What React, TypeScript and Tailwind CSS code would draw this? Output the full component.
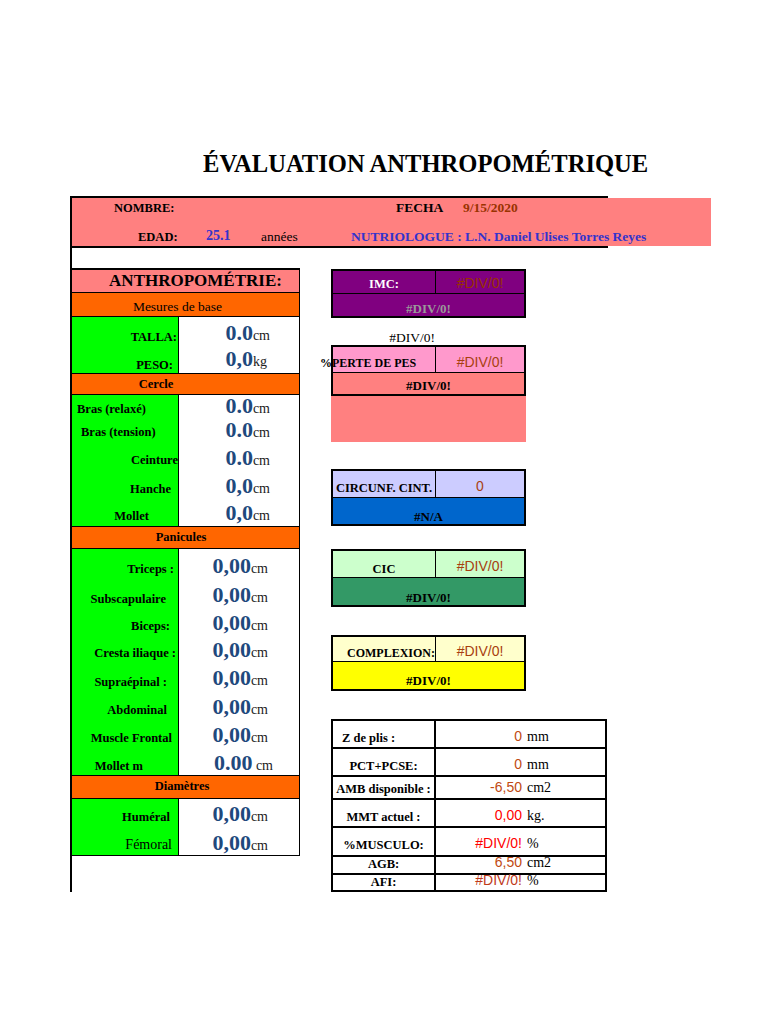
import React from "react";

type Row = {
  label: string;
  h: string;
  lc: string;
  value: string;
  unit: string;
  vc: string;
  normal?: boolean;
};

const baseRows: Row[] = [
  { label: "TALLA:", h: "h-[28px]", lc: "justify-end pr-[1px] pb-[2px]", value: "0.0", unit: "cm", vc: "pr-[29px] pb-[1px]" },
  { label: "PESO:", h: "h-[28px]", lc: "justify-end pr-[5px] pb-[2px]", value: "0,0", unit: "kg", vc: "pr-[32px] pb-[3px]" },
];

const cercleRows: Row[] = [
  { label: "Bras (relaxé)", h: "h-[23px]", lc: "justify-start pl-[5px] pb-[3px]", value: "0.0", unit: "cm", vc: "pr-[29px] pb-[1px]" },
  { label: "Bras (tension)", h: "h-[24px]", lc: "justify-start pl-[9px] pb-[4px]", value: "0.0", unit: "cm", vc: "pr-[29px] pb-[1px]" },
  { label: "Ceinture", h: "h-[28px]", lc: "justify-end pr-0 pb-[4px]", value: "0.0", unit: "cm", vc: "pr-[29px] pb-[1px]" },
  { label: "Hanche", h: "h-[28px]", lc: "justify-end pr-[7px] pb-[3px]", value: "0,0", unit: "cm", vc: "pr-[29px] pb-[1px]" },
  { label: "Mollet", h: "h-[28px]", lc: "justify-end pr-[29px] pb-[4px]", value: "0,0", unit: "cm", vc: "pr-[29px] pb-[2px]" },
];

const panRows: Row[] = [
  { label: "Triceps :", h: "h-[29px]", lc: "justify-end pr-[4px] pb-[3px]", value: "0,00", unit: "cm", vc: "pr-[31px] pb-[1px]" },
  { label: "Subscapulaire", h: "h-[30px]", lc: "justify-end pr-[12px] pb-[3px]", value: "0,00", unit: "cm", vc: "pr-[31px] pb-[2px]" },
  { label: "Biceps:", h: "h-[27px]", lc: "justify-end pr-[8px] pb-[3px]", value: "0,00", unit: "cm", vc: "pr-[31px] pb-[1px]" },
  { label: "Cresta iliaque :", h: "h-[28px]", lc: "justify-end pr-[2px] pb-[4px]", value: "0,00", unit: "cm", vc: "pr-[31px] pb-[2px]" },
  { label: "Supraépinal :", h: "h-[27px]", lc: "justify-end pr-[11px] pb-[2px]", value: "0,00", unit: "cm", vc: "pr-[31px] pb-[1px]" },
  { label: "Abdominal", h: "h-[30px]", lc: "justify-end pr-[11px] pb-[4px]", value: "0,00", unit: "cm", vc: "pr-[31px] pb-[2px]" },
  { label: "Muscle Frontal", h: "h-[28px]", lc: "justify-end pr-[6px] pb-[4px]", value: "0,00", unit: "cm", vc: "pr-[31px] pb-[2px]" },
  { label: "Mollet m", h: "h-[27px]", lc: "justify-end pr-[35px] pb-[3px]", value: "0.00", unit: "\u00a0cm", vc: "pr-[26px] pb-[1px]" },
];

const diamRows: Row[] = [
  { label: "Huméral", h: "h-[28px]", lc: "justify-end pr-[8px] pb-[4px]", value: "0,00", unit: "cm", vc: "pr-[31px] pb-[2px]" },
  { label: "Fémoral", h: "h-[28px]", lc: "justify-end pr-[6px] pb-[3px]", value: "0,00", unit: "cm", vc: "pr-[31px] pb-[1px]", normal: true },
];

const sans = "font-['Liberation_Sans',Arial,sans-serif]";

function MeasureRow({ r }: { r: Row }) {
  return (
    <div className={`flex ${r.h}`}>
      <div
        className={`w-[106px] bg-[#00FF00] flex items-end whitespace-nowrap leading-none ${r.lc} ${
          r.normal ? "text-[14px] font-normal" : "text-[12.5px] font-bold"
        }`}
      >
        {r.label}
      </div>
      <div className={`flex-1 bg-white border-l border-black flex items-end justify-end ${r.vc}`}>
        <span className="leading-none whitespace-nowrap">
          <span className="text-[22px] font-bold text-[#1F497D]">{r.value}</span>
          <span className="text-[14px] text-[#222]">{r.unit}</span>
        </span>
      </div>
    </div>
  );
}

function Band({ text, cls }: { text: string; cls: string }) {
  return (
    <div className={`bg-[#FF6600] border-black flex items-end justify-center leading-none ${cls}`}>
      {text}
    </div>
  );
}

type BRow = { label: string; h: string; pb: string; value: string; color: string; unit: string; lc: string };

const bottomRows: BRow[] = [
  { label: "Z de plis :", h: "h-[28px] border-b-2", pb: "pb-[3px]", value: "0", color: "text-[#BF4A12]", unit: "mm", lc: "justify-start pl-[9px]" },
  { label: "PCT+PCSE:", h: "h-[28px] border-b-2", pb: "pb-[3px]", value: "0", color: "text-[#BF4A12]", unit: "mm", lc: "justify-center" },
  { label: "AMB disponible :", h: "h-[23px] border-b-2", pb: "pb-[3px]", value: "-6,50", color: "text-[#BF4A12]", unit: "cm2", lc: "justify-center" },
  { label: "MMT actuel :", h: "h-[28px] border-b-2", pb: "pb-[3px]", value: "0,00", color: "text-[#FF0000]", unit: "kg.", lc: "justify-center" },
  { label: "%MUSCULO:", h: "h-[29px] border-b-2", pb: "pb-[4px]", value: "#DIV/0!", color: "text-[#FF0000]", unit: "%", lc: "justify-center" },
  { label: "AGB:", h: "h-[18px] border-b-2", pb: "pb-[3px]", value: "6,50", color: "text-[#BF4A12]", unit: "cm2", lc: "justify-center" },
  { label: "AFI:", h: "h-[15px]", pb: "pb-[2px]", value: "#DIV/0!", color: "text-[#C0391A]", unit: "%", lc: "justify-center" },
];

export default function App() {
  return (
    <div className="w-[768px] h-[1024px] bg-white text-black font-['Liberation_Serif','Times_New_Roman',serif]">
      <div className="pt-[152px] pl-[203px]">
        <div className="h-[24px] text-[24.6px] font-bold leading-none whitespace-nowrap">
          ÉVALUATION ANTHROPOMÉTRIQUE
        </div>
      </div>

      <div className="mt-[20px] ml-[70px] w-[641px] border-l-2 border-black">
        {/* header */}
        <div className="h-[2px] w-[536px] bg-black" />
        <div className="h-[48px] w-[639px] bg-[#FF8080] flex flex-col">
          <div className="h-[24px] flex items-end pb-[8px] pl-[42px] leading-none font-bold whitespace-nowrap">
            <span className="w-[282px] text-[12.5px]">NOMBRE:</span>
            <span className="w-[67px] text-[13.5px]">FECHA</span>
            <span className="text-[13.5px] text-[#993300]">9/15/2020</span>
          </div>
          <div className="h-[24px] flex items-end pb-[3px] pl-[66px] leading-none whitespace-nowrap">
            <span className="w-[68px] text-[12.5px] font-bold">EDAD:</span>
            <span className="w-[55px] text-[14px] font-bold text-[#3333CC]">25.1</span>
            <span className="w-[90px] text-[13.5px]">années</span>
            <span className="text-[13.5px] font-bold text-[#3333CC]">NUTRIOLOGUE : L.N. Daniel Ulises Torres Reyes</span>
          </div>
        </div>
        <div className="h-[2px] w-[536px] bg-black" />
        <div className="h-[20px]" />

        <div className="flex items-start">
          {/* left table */}
          <div className="w-[228px] border-t-2 border-r border-b border-black">
            <div className="h-[23px] bg-[#FF8080] border-b border-black flex items-end justify-center pl-[20px] pb-[3px] text-[17px] font-bold leading-none">
              ANTHROPOMÉTRIE:
            </div>
            <Band text="Mesures de base" cls="h-[24px] border-b text-[13.5px] pr-[16px] pb-[3px]" />
            {baseRows.map((r) => (
              <MeasureRow key={r.label} r={r} />
            ))}
            <Band text="Cercle" cls="h-[22px] border-y text-[12.5px] font-bold pr-[59px] pb-[4px]" />
            {cercleRows.map((r) => (
              <MeasureRow key={r.label} r={r} />
            ))}
            <Band text="Panicules" cls="h-[23px] border-y text-[12.5px] font-bold pr-[9px] pb-[5px]" />
            {panRows.map((r) => (
              <MeasureRow key={r.label} r={r} />
            ))}
            <Band text="Diamètres" cls="h-[24px] border-y text-[12.5px] font-bold pr-[7px] pb-[6px]" />
            {diamRows.map((r) => (
              <MeasureRow key={r.label} r={r} />
            ))}
          </div>

          {/* right column */}
          <div className="ml-[31px] w-[276px] flex flex-col">
            <div className="mt-[1px] w-[195px] h-[49px] border-2 border-black bg-[#800080] flex flex-col">
              <div className="h-[23px] flex border-b border-black">
                <div className="w-[103px] border-r border-black flex items-end justify-center pb-[3px] text-white font-bold text-[12.5px] leading-none">
                  IMC:
                </div>
                <div className={`flex-1 flex items-end justify-center pb-[3px] text-[14px] text-[#993300] leading-none ${sans}`}>
                  #DIV/0!
                </div>
              </div>
              <div className="flex-1 flex items-end justify-center pb-[1px] font-bold text-[13px] text-[#999999] leading-none">
                #DIV/0!
              </div>
            </div>

            <div className="h-[27px] w-[104px] flex items-end justify-end pb-[1px] text-[13.5px] leading-none">#DIV/0!</div>

            <div className="w-[195px] h-[51px] border-2 border-black flex flex-col">
              <div className="h-[26px] flex border-b border-black bg-[#FF99CC]">
                <div className="w-[103px] border-r border-black flex items-end justify-start pb-[3px] font-bold text-[12px] leading-none whitespace-nowrap">
                  <span className="ml-[-13px]">%PERTE DE PES</span>
                </div>
                <div className={`flex-1 flex items-end justify-center pb-[3px] text-[14px] text-[#A8400F] leading-none ${sans}`}>
                  #DIV/0!
                </div>
              </div>
              <div className="flex-1 bg-[#FF8080] flex items-end justify-center pb-[2px] font-bold text-[13px] leading-none">
                #DIV/0!
              </div>
            </div>
            <div className="h-[46px] w-[195px] bg-[#FF8080]" />

            <div className="mt-[27px] w-[195px] h-[57px] border-2 border-black flex flex-col">
              <div className="h-[27px] flex border-b border-black bg-[#CCCCFF]">
                <div className="w-[103px] border-r border-black flex items-end justify-center pb-[3px] font-bold text-[12.5px] leading-none whitespace-nowrap">
                  CIRCUNF. CINT.
                </div>
                <div className={`flex-1 flex items-end justify-center pb-[4px] text-[14px] text-[#A8400F] leading-none ${sans}`}>
                  0
                </div>
              </div>
              <div className="flex-1 bg-[#0066CC] flex items-end justify-center pb-[1px] font-bold text-[13px] leading-none">
                #N/A
              </div>
            </div>

            <div className="mt-[23px] w-[195px] h-[58px] border-2 border-black flex flex-col">
              <div className="h-[27px] flex border-b border-black bg-[#CCFFCC]">
                <div className="w-[103px] border-r border-black flex items-end justify-center pb-[2px] font-bold text-[12.5px] leading-none">
                  CIC
                </div>
                <div className={`flex-1 flex items-end justify-center pb-[4px] text-[14px] text-[#A8400F] leading-none ${sans}`}>
                  #DIV/0!
                </div>
              </div>
              <div className="flex-1 bg-[#339966] flex items-end justify-center pb-[1px] font-bold text-[13px] leading-none">
                #DIV/0!
              </div>
            </div>

            <div className="mt-[28px] w-[195px] h-[56px] border-2 border-black flex flex-col">
              <div className="h-[25px] flex border-b border-black bg-[#FFFFCC]">
                <div className="w-[103px] border-r border-black flex items-end justify-end pb-[2px] font-bold text-[12px] leading-none whitespace-nowrap">
                  COMPLEXION:
                </div>
                <div className={`flex-1 flex items-end justify-center pb-[3px] text-[14px] text-[#A8400F] leading-none ${sans}`}>
                  #DIV/0!
                </div>
              </div>
              <div className="flex-1 bg-[#FFFF00] flex items-end justify-center pb-[2px] font-bold text-[13px] leading-none">
                #DIV/0!
              </div>
            </div>

            <div className="mt-[28px] w-[276px] h-[173px] border-2 border-black flex flex-col">
              {bottomRows.map((r) => (
                <div key={r.label} className={`flex border-black ${r.h}`}>
                  <div className={`w-[103px] border-r-2 border-black flex items-end ${r.lc} ${r.pb} font-bold text-[12.5px] leading-none whitespace-nowrap`}>
                    {r.label}
                  </div>
                  <div className={`flex-1 flex items-end ${r.pb} leading-none whitespace-nowrap`}>
                    <div className="flex items-baseline">
                      <span className={`w-[86px] text-right text-[14px] ${sans} ${r.color}`}>{r.value}</span>
                      <span className="ml-[5px] text-[14px]">{r.unit}</span>
                    </div>
                  </div>
                </div>
              ))}
            </div>
          </div>
        </div>
      </div>
    </div>
  );
}
